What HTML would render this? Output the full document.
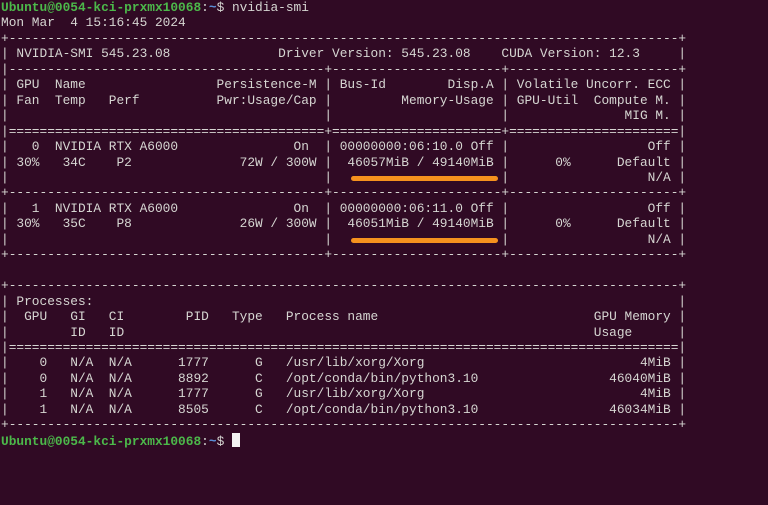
<!DOCTYPE html>
<html><head><meta charset="utf-8"><style>
html,body{margin:0;padding:0;background:#300a24;width:768px;height:505px;overflow:hidden}
pre{position:absolute;left:1px;top:0px;margin:0;font-family:"Liberation Mono","DejaVu Sans Mono",monospace;font-size:12.83px;line-height:15.45px;color:#d6d6d2;white-space:pre}
.g{color:#4cb84a;font-weight:bold}.b{color:#5b8fd8;font-weight:bold}
.cur{display:inline-block;width:8px;height:14px;background:#f2f2f2;vertical-align:-2px}
.bar{position:absolute;left:351px;width:147px;height:5px;border-radius:3px;background:#f5921e}
</style></head><body>
<pre><span class="g">Ubuntu@0054-kci-prxmx10068</span>:<span class="b">~</span>$ nvidia-smi
Mon Mar  4 15:16:45 2024
+---------------------------------------------------------------------------------------+
| NVIDIA-SMI 545.23.08              Driver Version: 545.23.08    CUDA Version: 12.3     |
|-----------------------------------------+----------------------+----------------------+
| GPU  Name                 Persistence-M | Bus-Id        Disp.A | Volatile Uncorr. ECC |
| Fan  Temp   Perf          Pwr:Usage/Cap |         Memory-Usage | GPU-Util  Compute M. |
|                                         |                      |               MIG M. |
|=========================================+======================+======================|
|   0  NVIDIA RTX A6000               On  | 00000000:06:10.0 Off |                  Off |
| 30%   34C    P2              72W / 300W |  46057MiB / 49140MiB |      0%      Default |
|                                         |                      |                  N/A |
+-----------------------------------------+----------------------+----------------------+
|   1  NVIDIA RTX A6000               On  | 00000000:06:11.0 Off |                  Off |
| 30%   35C    P8              26W / 300W |  46051MiB / 49140MiB |      0%      Default |
|                                         |                      |                  N/A |
+-----------------------------------------+----------------------+----------------------+

+---------------------------------------------------------------------------------------+
| Processes:                                                                            |
|  GPU   GI   CI        PID   Type   Process name                            GPU Memory |
|        ID   ID                                                             Usage      |
|=======================================================================================|
|    0   N/A  N/A      1777      G   /usr/lib/xorg/Xorg                            4MiB |
|    0   N/A  N/A      8892      C   /opt/conda/bin/python3.10                 46040MiB |
|    1   N/A  N/A      1777      G   /usr/lib/xorg/Xorg                            4MiB |
|    1   N/A  N/A      8505      C   /opt/conda/bin/python3.10                 46034MiB |
+---------------------------------------------------------------------------------------+
<span class="g">Ubuntu@0054-kci-prxmx10068</span>:<span class="b">~</span>$ <span class="cur"></span></pre>
<div class="bar" style="top:176px"></div>
<div class="bar" style="top:238px"></div>
</body></html>
